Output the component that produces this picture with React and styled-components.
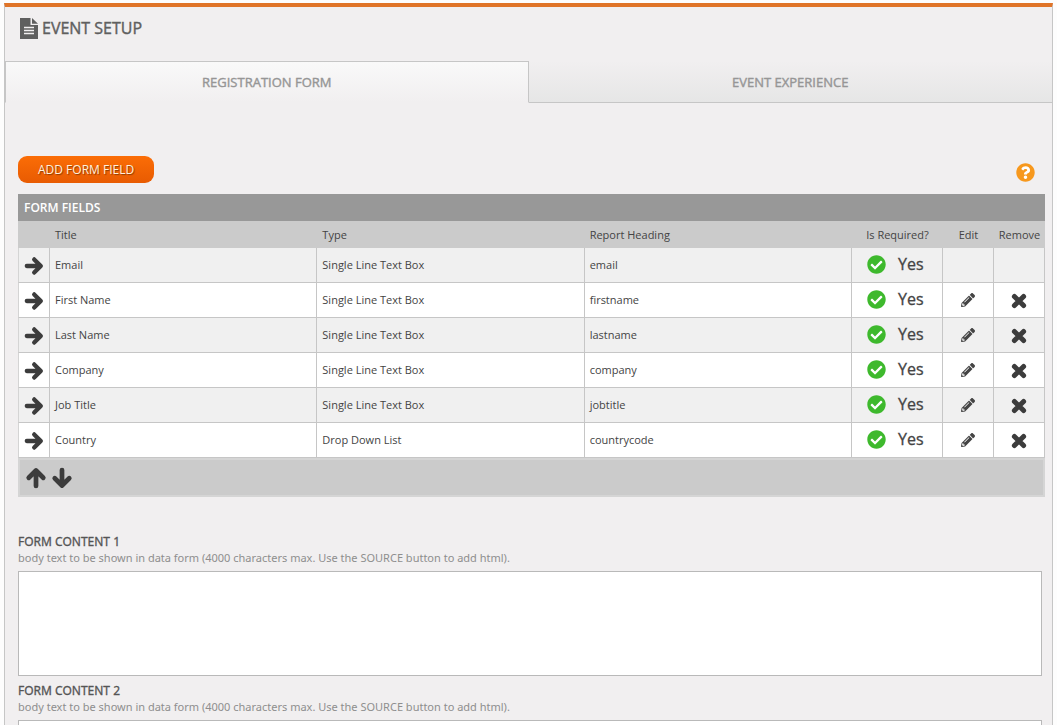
import { useState } from 'react';
import styled, { createGlobalStyle } from 'styled-components';
import { FaCheckCircle, FaQuestionCircle, FaPencilAlt } from 'react-icons/fa';

const GlobalStyle = createGlobalStyle`
  * {
    box-sizing: border-box;
  }

  body {
    margin: 0;
    background-color: #fdfdfd;
    color: #444;
    font-family: 'Open Sans', 'Noto Sans', sans-serif;
    font-size: 11px;
  }

  button {
    font-family: inherit;
    border: none;
    padding: 0;
    background: none;
    color: inherit;
    cursor: pointer;
  }
`;

const Panel = styled.main`
  margin: 3px 4px 0;
  border: 1px solid #c6c6c6;
  border-top: 4px solid #e07428;
  border-bottom: none;
  background-color: #f1eff0;
`;

const PageHeader = styled.header`
  display: flex;
  align-items: center;
  gap: 4px;
  height: 54px;
  padding: 0 15px 12px;
  color: #5f5f5f;
`;

const PageTitle = styled.h1`
  margin: 0;
  font-size: 16px;
  font-weight: 400;
  line-height: 22px;
  -webkit-text-stroke: 0.4px;
`;

const Tabs = styled.div`
  display: grid;
  grid-template-columns: 1fr 1fr;
`;

const Tab = styled.button`
  height: 42px;
  font-size: 13px;
  color: #969696;
  -webkit-text-stroke: 0.4px;
  border: solid #c6c6c6;
  border-width: ${({ $active }) => ($active ? '1px' : '0 0 1px')};
  border-bottom-color: ${({ $active }) => ($active ? '#f1eff0' : '#c6c6c6')};
  background: ${({ $active }) =>
    $active
      ? 'linear-gradient(#f9f9f9, #f1eff0)'
      : 'linear-gradient(#f1eff0, #e6e6e6)'};
`;

const Content = styled.section`
  padding: 53px 7px 0 13px;
`;

const Toolbar = styled.div`
  display: flex;
  justify-content: space-between;
  align-items: flex-start;
  height: 38px;
`;

const AddButton = styled.button`
  height: 27px;
  padding: 0 20px;
  border-radius: 9px;
  background: linear-gradient(#fb6d06, #e85b02);
  color: #fff0dc;
  font-size: 12px;
  text-shadow: 1px 1px 1px rgba(0, 0, 0, 0.4);
`;

const HelpButton = styled.button`
  display: flex;
  margin: 7px 10px 0 0;
  border-radius: 50%;
  color: #f7981d;

  svg {
    background: radial-gradient(#fff 55%, transparent 56%);
  }
`;

const FieldTable = styled.table`
  width: 100%;
  table-layout: fixed;
  border-collapse: separate;
  border-spacing: 0;
  color: #444;

  caption {
    height: 27px;
    padding-left: 6px;
    background-color: #989898;
    color: #fff;
    font-size: 12px;
    font-weight: 600;
    line-height: 27px;
    text-align: left;
  }

  th {
    height: 27px;
    padding: 0 5px;
    background-color: #cbcbcb;
    font-weight: 400;
    text-align: left;
    white-space: nowrap;
  }

  tbody td {
    height: 35px;
    padding: 0 5px 2px;
    border-right: 1px solid #c6c6c6;
    border-bottom: 1px solid #c6c6c6;
  }

  tbody td:first-child {
    border-left: 1px solid #d4d4d4;
  }

  tbody tr {
    background-color: #fff;
  }

  tbody tr:nth-child(odd) {
    background-color: #f0f0f0;
  }

  tfoot td {
    height: 39px;
    padding: 0 4px;
    border: 2px solid #d5d5d5;
    background-color: #cbcbcb;
  }
`;

const Col = styled.col`
  width: ${({ $width }) => ($width ? `${$width}px` : 'auto')};
`;

const HeadCell = styled.th`
  &&& {
    padding: 0;
    text-align: center;
  }
`;

const IconButton = styled.button`
  display: flex;
  align-items: center;
  justify-content: center;
  width: 100%;
  height: 26px;
  padding-top: 4px;
`;

const EditButton = styled(IconButton)`
  padding-top: 2px;
`;

const Required = styled.div`
  display: flex;
  align-items: center;
  gap: 12px;
  padding-left: 10px;
  font-size: 16px;
  line-height: 24px;
  -webkit-text-stroke: 0.3px;

  svg {
    background: radial-gradient(#fff 55%, transparent 56%);
    color: #3eb92d;
  }
`;

const MoveButtons = styled.div`
  display: flex;
  gap: 2px;

  button {
    width: 24px;
    padding-top: 0;
  }
`;

const Editors = styled.div`
  padding: 36px 3px 0 0;
`;

const Editor = styled.div`
  display: flex;
  flex-direction: column;
  margin-bottom: 6px;
  font-family: 'Noto Sans', 'Open Sans', sans-serif;

  label {
    font-size: 12px;
    line-height: 18px;
    color: #555;
    -webkit-text-stroke: 0.3px;
  }

  p {
    margin: 0 0 6px;
    line-height: 14px;
    color: #8e8e8e;
  }

  textarea {
    height: 105px;
    padding: 5px;
    border: 1px solid #b9b9b9;
    background-color: #fff;
    font-family: inherit;
    resize: none;
  }
`;

const fields = [
  { title: 'Email', type: 'Single Line Text Box', heading: 'email', locked: true },
  { title: 'First Name', type: 'Single Line Text Box', heading: 'firstname' },
  { title: 'Last Name', type: 'Single Line Text Box', heading: 'lastname' },
  { title: 'Company', type: 'Single Line Text Box', heading: 'company' },
  { title: 'Job Title', type: 'Single Line Text Box', heading: 'jobtitle' },
  { title: 'Country', type: 'Drop Down List', heading: 'countrycode' },
];

const tabs = ['REGISTRATION FORM', 'EVENT EXPERIENCE'];

const rotations = { right: 0, down: 90, up: 270 };

function Arrow({ direction, size = 20 }) {
  return (
    <svg width={size} height={size} viewBox='0 0 20 20' aria-hidden='true'>
      <path
        d='M2.8 10H16M10.2 3.4 16.8 10 10.2 16.6'
        transform={`rotate(${rotations[direction]} 10 10)`}
        stroke='#3c3c3c'
        strokeWidth='4.3'
        strokeLinecap='round'
        strokeLinejoin='round'
        fill='none'
      />
    </svg>
  );
}

function Document() {
  return (
    <svg width='18' height='21' viewBox='0 0 18 21' aria-hidden='true'>
      <path d='M0 0H10.5V7H18V21H0Z' fill='#5f5f5f' />
      <path d='M12 0 18 5.7H12Z' fill='#5f5f5f' />
      <path d='M4 9.5H14M4 12.5H14M4 15.5H14' stroke='#f1eff0' strokeWidth='1.3' />
    </svg>
  );
}

function Cross() {
  return (
    <svg width='16' height='16' viewBox='0 0 16 16' aria-hidden='true'>
      <path
        d='M3.4 3.4 12.6 12.6M12.6 3.4 3.4 12.6'
        stroke='#3c3c3c'
        strokeWidth='5'
        strokeLinecap='round'
      />
    </svg>
  );
}

export default function App() {
  const [activeTab, setActiveTab] = useState(0);

  return (
    <>
      <GlobalStyle />
      <Panel>
        <PageHeader>
          <Document />
          <PageTitle>EVENT SETUP</PageTitle>
        </PageHeader>
        <Tabs role='tablist'>
          {tabs.map((tab, index) => (
            <Tab
              key={tab}
              role='tab'
              aria-selected={index === activeTab}
              $active={index === activeTab}
              onClick={() => setActiveTab(index)}
            >
              {tab}
            </Tab>
          ))}
        </Tabs>
        <Content>
          <Toolbar>
            <AddButton>ADD FORM FIELD</AddButton>
            <HelpButton aria-label='Help'>
              <FaQuestionCircle size={19} />
            </HelpButton>
          </Toolbar>
          <FieldTable>
            <caption>FORM FIELDS</caption>
            <colgroup>
              <Col $width={32} />
              <Col />
              <Col />
              <Col />
              <Col $width={91} />
              <Col $width={51} />
              <Col $width={51} />
            </colgroup>
            <thead>
              <tr>
                <th aria-label='Select' />
                <th>Title</th>
                <th>Type</th>
                <th>Report Heading</th>
                <HeadCell>Is Required?</HeadCell>
                <HeadCell>Edit</HeadCell>
                <HeadCell>Remove</HeadCell>
              </tr>
            </thead>
            <tbody>
              {fields.map(({ title, type, heading, locked }) => (
                <tr key={title}>
                  <td>
                    <IconButton aria-label={`Select ${title}`}>
                      <Arrow direction='right' />
                    </IconButton>
                  </td>
                  <td>{title}</td>
                  <td>{type}</td>
                  <td>{heading}</td>
                  <td>
                    <Required>
                      <FaCheckCircle size={19} />
                      Yes
                    </Required>
                  </td>
                  <td>
                    {!locked && (
                      <EditButton aria-label={`Edit ${title}`}>
                        <FaPencilAlt size={14} />
                      </EditButton>
                    )}
                  </td>
                  <td>
                    {!locked && (
                      <IconButton aria-label={`Remove ${title}`}>
                        <Cross />
                      </IconButton>
                    )}
                  </td>
                </tr>
              ))}
            </tbody>
            <tfoot>
              <tr>
                <td colSpan={7}>
                  <MoveButtons>
                    <IconButton aria-label='Move up'>
                      <Arrow direction='up' size={22} />
                    </IconButton>
                    <IconButton aria-label='Move down'>
                      <Arrow direction='down' size={22} />
                    </IconButton>
                  </MoveButtons>
                </td>
              </tr>
            </tfoot>
          </FieldTable>
          <Editors>
            {[1, 2].map((number) => (
              <Editor key={number}>
                <label htmlFor={`content-${number}`}>FORM CONTENT {number}</label>
                <p>
                  body text to be shown in data form (4000 characters max. Use the
                  SOURCE button to add html).
                </p>
                <textarea id={`content-${number}`} />
              </Editor>
            ))}
          </Editors>
        </Content>
      </Panel>
    </>
  );
}
